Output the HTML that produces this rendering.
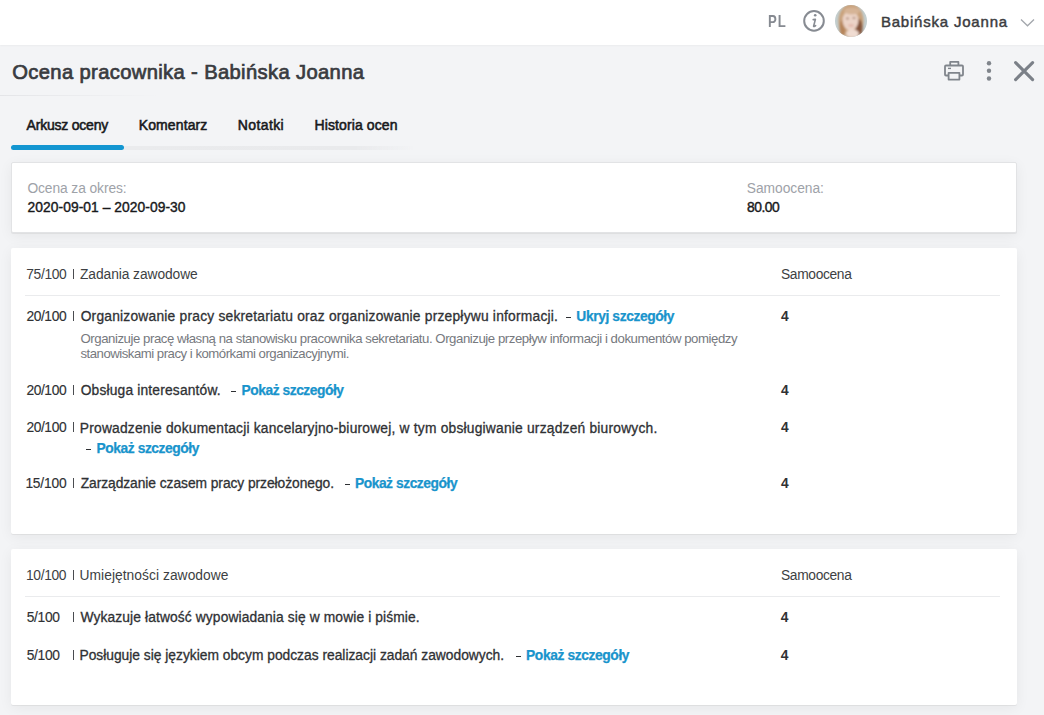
<!DOCTYPE html>
<html><head><meta charset="utf-8">
<style>
html,body{margin:0;padding:0;}
body{width:1044px;height:715px;overflow:hidden;background:#f3f4f6;position:relative;font-family:"Liberation Sans",sans-serif;}
.t{position:absolute;white-space:nowrap;font-family:"Liberation Sans",sans-serif;}
.top{position:absolute;left:0;top:0;width:1044px;height:45px;background:#fff;box-shadow:0 1px 1.5px rgba(0,0,0,0.035);}
.card{position:absolute;left:11px;width:1006px;background:#fff;box-shadow:0 1px 0 rgba(0,0,0,0.05),0 3px 14px rgba(0,0,0,0.06);box-sizing:border-box;border-radius:2px;}
.div{position:absolute;left:25px;width:975px;height:1px;background:#eaebed;}
.sep{position:absolute;left:73px;width:1.4px;height:9.6px;background:#4a4c50;}
.dash{position:absolute;height:1.6px;background:#2e3033;}
</style></head><body>
<div class="top"></div>
<div style="position:absolute;left:0;top:95px;width:160px;height:1px;background:linear-gradient(90deg,#e4e5e8,rgba(228,229,232,0));"></div>
<!-- tabs -->
<div style="position:absolute;left:124px;top:146px;width:290px;height:3.5px;background:linear-gradient(90deg,#eaebed 0,#e9eaec 80%,rgba(233,234,236,0) 100%);filter:blur(0.4px);"></div>
<div style="position:absolute;left:11px;top:145px;width:113px;height:5px;border-radius:3px;background:#1396d1;"></div>
<!-- cards -->
<div class="card" style="top:162px;height:71px;border:1px solid #e2e3e5;"></div>
<div class="card" style="top:248px;height:286px;"></div>
<div class="card" style="top:549px;height:156px;"></div>
<div class="div" style="top:295px;"></div>
<div class="div" style="top:596px;"></div>
<!-- separators -->
<div class="sep" style="top:269.4px;"></div>
<div class="sep" style="top:311.4px;"></div>
<div class="sep" style="top:385.4px;"></div>
<div class="sep" style="top:422.4px;"></div>
<div class="sep" style="top:478.4px;"></div>
<div class="sep" style="top:570.4px;"></div>
<div class="sep" style="top:612.4px;"></div>
<div class="sep" style="top:650.4px;"></div>
<!-- dashes -->
<div class="dash" style="left:566px;width:5.2px;top:316.6px;"></div>
<div class="dash" style="left:231px;width:5.2px;top:390.6px;"></div>
<div class="dash" style="left:86px;width:5.1px;top:448.6px;"></div>
<div class="dash" style="left:344.6px;width:5px;top:483.6px;"></div>
<div class="dash" style="left:516.4px;width:5px;top:655.6px;"></div>
<!-- top icons -->
<svg style="position:absolute;left:0;top:0" width="1044" height="100" viewBox="0 0 1044 100">
  <circle cx="814" cy="20.9" r="9.8" fill="none" stroke="#878b92" stroke-width="2"/>
  <circle cx="815.2" cy="15.2" r="1.3" fill="#878b92"/>
  <path d="M813.2 19.6 L815.4 19.4 L813.6 26.2 Q813.8 27 815.6 25.6" fill="none" stroke="#878b92" stroke-width="1.6" stroke-linecap="round" stroke-linejoin="round"/>
  <path d="M1021 19.5 L1027.5 25.8 L1034 19.5" fill="none" stroke="#a3a7ac" stroke-width="1.3"/>
  <!-- printer -->
  <g fill="none" stroke="#80858c" stroke-width="1.8" stroke-linejoin="round">
    <path d="M950.2 65 V61.9 H958.4 V65"/>
    <path d="M948.5 75.5 H946 Q945 75.5 945 74.5 V66.5 Q945 65.5 946 65.5 H962 Q963 65.5 963 66.5 V74.5 Q963 75.5 962 75.5 H959.5"/>
    <path d="M948.6 72.8 H959.4 V79.6 H948.6 Z"/>
  </g>
  <path d="M948 68.4 H951" stroke="#80858c" stroke-width="1.4"/>
  <circle cx="989" cy="63.2" r="2.2" fill="#80858c"/>
  <circle cx="989" cy="70.8" r="2.2" fill="#80858c"/>
  <circle cx="989" cy="78.5" r="2.2" fill="#80858c"/>
  <path d="M1015.6 62.6 L1032.6 79.6 M1032.6 62.6 L1015.6 79.6" stroke="#7b8088" stroke-width="3.1" stroke-linecap="round"/>
</svg>
<!-- avatar -->
<svg style="position:absolute;left:835px;top:5px" width="32" height="32" viewBox="0 0 32 32">
  <defs><clipPath id="av"><circle cx="16" cy="16" r="16"/></clipPath>
  <filter id="bl" x="-50%" y="-50%" width="200%" height="200%"><feGaussianBlur stdDeviation="0.8"/></filter></defs>
  <g clip-path="url(#av)">
    <rect width="32" height="32" fill="#c3cecf"/>
    <g filter="url(#bl)">
      <ellipse cx="16" cy="16" rx="12.5" ry="17" fill="#c9a27c"/>
      <ellipse cx="24" cy="23" rx="3.5" ry="9" fill="#85553a"/>
      <ellipse cx="7.5" cy="23" rx="3" ry="8" fill="#b5845a"/>
      <ellipse cx="15.5" cy="15.5" rx="8" ry="10" fill="#ecd4c7"/>
      <ellipse cx="17" cy="6" rx="8" ry="3.5" fill="#d6b496"/>
      <ellipse cx="12.5" cy="13.5" rx="1.6" ry="0.9" fill="#a98474"/>
      <ellipse cx="19" cy="13" rx="1.6" ry="0.9" fill="#a98474"/>
      <ellipse cx="16" cy="20.5" rx="3" ry="1.2" fill="#e2b5a8"/>
      <ellipse cx="17.5" cy="28.5" rx="6.5" ry="4" fill="#f0dcd2"/>
    </g>
  </g>
</svg>
<div class="t" style="left:768.20px;top:11.28px;font-size:16.5px;line-height:20px;color:#868a91;font-weight:700;letter-spacing:1.200px;transform:scaleX(0.7970);transform-origin:0 0">PL</div>
<div class="t" style="left:880.93px;top:12.80px;font-size:15px;line-height:18px;color:#3b3c40;font-weight:400;letter-spacing:0.793px;-webkit-text-stroke:0.45px #3b3c40">Babińska Joanna</div>
<div class="t" style="left:12.25px;top:60.00px;font-size:20.2px;line-height:24px;color:#393b40;font-weight:400;letter-spacing:0.355px;-webkit-text-stroke:0.70px #393b40">Ocena pracownika - Babińska Joanna</div>
<div class="t" style="left:26.57px;top:116.65px;font-size:14px;line-height:17px;color:#18191c;font-weight:400;letter-spacing:-0.217px;-webkit-text-stroke:0.55px #18191c">Arkusz oceny</div>
<div class="t" style="left:138.78px;top:116.65px;font-size:14px;line-height:17px;color:#18191c;font-weight:400;letter-spacing:0.107px;-webkit-text-stroke:0.55px #18191c">Komentarz</div>
<div class="t" style="left:237.78px;top:116.65px;font-size:14px;line-height:17px;color:#18191c;font-weight:400;letter-spacing:0.398px;-webkit-text-stroke:0.55px #18191c">Notatki</div>
<div class="t" style="left:314.57px;top:116.65px;font-size:14px;line-height:17px;color:#18191c;font-weight:400;letter-spacing:0.103px;-webkit-text-stroke:0.55px #18191c">Historia ocen</div>
<div class="t" style="left:27.40px;top:179.72px;font-size:13.8px;line-height:17px;color:#9ea2a8;font-weight:400;letter-spacing:-0.088px">Ocena za okres:</div>
<div class="t" style="left:27.60px;top:198.72px;font-size:13.8px;line-height:17px;color:#18191b;font-weight:400;letter-spacing:0.063px;-webkit-text-stroke:0.40px #18191b">2020-09-01 – 2020-09-30</div>
<div class="t" style="left:746.80px;top:179.72px;font-size:13.8px;line-height:17px;color:#9ea2a8;font-weight:400;letter-spacing:-0.037px">Samoocena:</div>
<div class="t" style="left:747.00px;top:198.72px;font-size:13.8px;line-height:17px;color:#18191b;font-weight:400;letter-spacing:-0.438px;-webkit-text-stroke:0.40px #18191b">80.00</div>
<div class="t" style="left:26.30px;top:265.72px;font-size:13.8px;line-height:17px;color:#3d3f43;font-weight:400;letter-spacing:-0.365px">75/100</div>
<div class="t" style="left:80.00px;top:265.72px;font-size:13.8px;line-height:17px;color:#3d3f43;font-weight:400;letter-spacing:-0.074px">Zadania zawodowe</div>
<div class="t" style="left:781.00px;top:265.72px;font-size:13.8px;line-height:17px;color:#3d3f43;font-weight:400;letter-spacing:-0.345px">Samoocena</div>
<div class="t" style="left:26.38px;top:307.72px;font-size:13.8px;line-height:17px;color:#2f3134;font-weight:400;letter-spacing:-0.395px;-webkit-text-stroke:0.15px #2f3134">20/100</div>
<div class="t" style="left:80.65px;top:307.72px;font-size:13.8px;line-height:17px;color:#2f3134;font-weight:400;letter-spacing:0.217px;-webkit-text-stroke:0.30px #2f3134">Organizowanie pracy sekretariatu oraz organizowanie przepływu informacji.</div>
<div class="t" style="left:576.33px;top:307.72px;font-size:13.8px;line-height:17px;color:#1994cc;font-weight:700;letter-spacing:-0.386px;-webkit-text-stroke:0.25px #1994cc">Ukryj szczegóły</div>
<div class="t" style="left:781.00px;top:307.72px;font-size:13.8px;line-height:17px;color:#2f3134;font-weight:700;letter-spacing:0.000px">4</div>
<div class="t" style="left:80.50px;top:331.42px;font-size:13.2px;line-height:16px;color:#76797e;font-weight:400;letter-spacing:-0.441px">Organizuje pracę własną na stanowisku pracownika sekretariatu. Organizuje przepływ informacji i dokumentów pomiędzy</div>
<div class="t" style="left:80.50px;top:346.42px;font-size:13.2px;line-height:16px;color:#76797e;font-weight:400;letter-spacing:-0.496px">stanowiskami pracy i komórkami organizacyjnymi.</div>
<div class="t" style="left:26.38px;top:381.72px;font-size:13.8px;line-height:17px;color:#2f3134;font-weight:400;letter-spacing:-0.395px;-webkit-text-stroke:0.15px #2f3134">20/100</div>
<div class="t" style="left:80.65px;top:381.72px;font-size:13.8px;line-height:17px;color:#2f3134;font-weight:400;letter-spacing:0.176px;-webkit-text-stroke:0.30px #2f3134">Obsługa interesantów.</div>
<div class="t" style="left:241.62px;top:381.72px;font-size:13.8px;line-height:17px;color:#1994cc;font-weight:700;letter-spacing:-0.469px;-webkit-text-stroke:0.25px #1994cc">Pokaż szczegóły</div>
<div class="t" style="left:781.00px;top:381.72px;font-size:13.8px;line-height:17px;color:#2f3134;font-weight:700;letter-spacing:0.000px">4</div>
<div class="t" style="left:26.38px;top:418.72px;font-size:13.8px;line-height:17px;color:#2f3134;font-weight:400;letter-spacing:-0.395px;-webkit-text-stroke:0.15px #2f3134">20/100</div>
<div class="t" style="left:79.85px;top:419.72px;font-size:13.8px;line-height:17px;color:#2f3134;font-weight:400;letter-spacing:0.207px;-webkit-text-stroke:0.30px #2f3134">Prowadzenie dokumentacji kancelaryjno-biurowej, w tym obsługiwanie urządzeń biurowych.</div>
<div class="t" style="left:96.62px;top:439.72px;font-size:13.8px;line-height:17px;color:#1994cc;font-weight:700;letter-spacing:-0.440px;-webkit-text-stroke:0.25px #1994cc">Pokaż szczegóły</div>
<div class="t" style="left:781.00px;top:418.72px;font-size:13.8px;line-height:17px;color:#2f3134;font-weight:700;letter-spacing:0.000px">4</div>
<div class="t" style="left:25.38px;top:474.72px;font-size:13.8px;line-height:17px;color:#2f3134;font-weight:400;letter-spacing:-0.195px;-webkit-text-stroke:0.15px #2f3134">15/100</div>
<div class="t" style="left:80.65px;top:474.72px;font-size:13.8px;line-height:17px;color:#2f3134;font-weight:400;letter-spacing:-0.055px;-webkit-text-stroke:0.30px #2f3134">Zarządzanie czasem pracy przełożonego.</div>
<div class="t" style="left:354.93px;top:474.72px;font-size:13.8px;line-height:17px;color:#1994cc;font-weight:700;letter-spacing:-0.447px;-webkit-text-stroke:0.25px #1994cc">Pokaż szczegóły</div>
<div class="t" style="left:781.00px;top:474.72px;font-size:13.8px;line-height:17px;color:#2f3134;font-weight:700;letter-spacing:0.000px">4</div>
<div class="t" style="left:26.00px;top:566.72px;font-size:13.8px;line-height:17px;color:#3d3f43;font-weight:400;letter-spacing:-0.345px">10/100</div>
<div class="t" style="left:79.50px;top:566.72px;font-size:13.8px;line-height:17px;color:#3d3f43;font-weight:400;letter-spacing:0.049px">Umiejętności zawodowe</div>
<div class="t" style="left:781.00px;top:566.72px;font-size:13.8px;line-height:17px;color:#3d3f43;font-weight:400;letter-spacing:-0.345px">Samoocena</div>
<div class="t" style="left:26.77px;top:608.72px;font-size:13.8px;line-height:17px;color:#2f3134;font-weight:400;letter-spacing:-0.326px;-webkit-text-stroke:0.15px #2f3134">5/100</div>
<div class="t" style="left:80.45px;top:608.72px;font-size:13.8px;line-height:17px;color:#2f3134;font-weight:400;letter-spacing:0.116px;-webkit-text-stroke:0.30px #2f3134">Wykazuje łatwość wypowiadania się w mowie i piśmie.</div>
<div class="t" style="left:780.80px;top:608.72px;font-size:13.8px;line-height:17px;color:#2f3134;font-weight:700;letter-spacing:0.000px">4</div>
<div class="t" style="left:26.77px;top:646.72px;font-size:13.8px;line-height:17px;color:#2f3134;font-weight:400;letter-spacing:-0.326px;-webkit-text-stroke:0.15px #2f3134">5/100</div>
<div class="t" style="left:79.45px;top:646.72px;font-size:13.8px;line-height:17px;color:#2f3134;font-weight:400;letter-spacing:-0.003px;-webkit-text-stroke:0.30px #2f3134">Posługuje się językiem obcym podczas realizacji zadań zawodowych.</div>
<div class="t" style="left:526.02px;top:646.72px;font-size:13.8px;line-height:17px;color:#1994cc;font-weight:700;letter-spacing:-0.383px;-webkit-text-stroke:0.25px #1994cc">Pokaż szczegóły</div>
<div class="t" style="left:780.80px;top:646.72px;font-size:13.8px;line-height:17px;color:#2f3134;font-weight:700;letter-spacing:0.000px">4</div>
</body></html>
